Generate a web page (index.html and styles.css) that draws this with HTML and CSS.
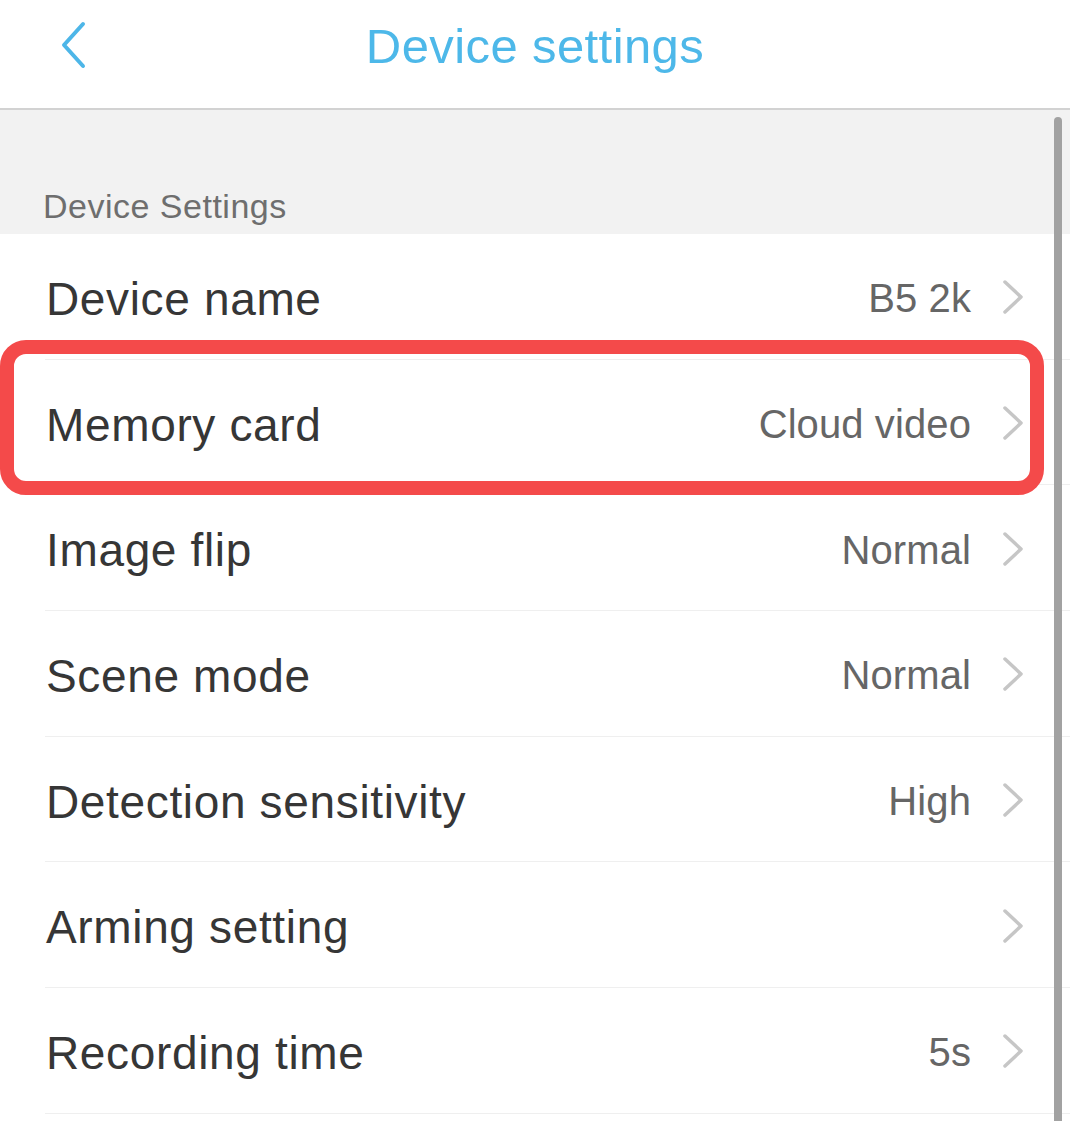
FILE: index.html
```html
<!DOCTYPE html>
<html lang="en">
<head>
<meta charset="utf-8">
<title>Device settings</title>
<link rel="stylesheet" href="styles.css">
</head>
<body>
<div class="screen">
  <header class="topbar">
    <span class="back">
      <svg width="30" height="50" viewBox="0 0 30 50"><polyline points="22,3 3,24 22,45" fill="none" stroke="#4db6e8" stroke-width="4" stroke-linecap="round" stroke-linejoin="round"/></svg>
    </span>
    <h1 class="title">Device settings</h1>
  </header>
  <div class="section-head"><span>Device Settings</span></div>
  <ul class="list">
    <li class="row"><span class="label">Device name</span><span class="value">B5 2k</span><span class="chev"><svg width="22" height="34" viewBox="0 0 22 34"><polyline points="3,2 19,17 3,32" fill="none" stroke="#c6c6c6" stroke-width="3.5" stroke-linecap="round" stroke-linejoin="round"/></svg></span></li>
    <li class="row"><span class="label">Memory card</span><span class="value">Cloud video</span><span class="chev"><svg width="22" height="34" viewBox="0 0 22 34"><polyline points="3,2 19,17 3,32" fill="none" stroke="#c6c6c6" stroke-width="3.5" stroke-linecap="round" stroke-linejoin="round"/></svg></span></li>
    <li class="row"><span class="label">Image flip</span><span class="value">Normal</span><span class="chev"><svg width="22" height="34" viewBox="0 0 22 34"><polyline points="3,2 19,17 3,32" fill="none" stroke="#c6c6c6" stroke-width="3.5" stroke-linecap="round" stroke-linejoin="round"/></svg></span></li>
    <li class="row"><span class="label">Scene mode</span><span class="value">Normal</span><span class="chev"><svg width="22" height="34" viewBox="0 0 22 34"><polyline points="3,2 19,17 3,32" fill="none" stroke="#c6c6c6" stroke-width="3.5" stroke-linecap="round" stroke-linejoin="round"/></svg></span></li>
    <li class="row"><span class="label">Detection sensitivity</span><span class="value">High</span><span class="chev"><svg width="22" height="34" viewBox="0 0 22 34"><polyline points="3,2 19,17 3,32" fill="none" stroke="#c6c6c6" stroke-width="3.5" stroke-linecap="round" stroke-linejoin="round"/></svg></span></li>
    <li class="row"><span class="label">Arming setting</span><span class="value"></span><span class="chev"><svg width="22" height="34" viewBox="0 0 22 34"><polyline points="3,2 19,17 3,32" fill="none" stroke="#c6c6c6" stroke-width="3.5" stroke-linecap="round" stroke-linejoin="round"/></svg></span></li>
    <li class="row"><span class="label">Recording time</span><span class="value">5s</span><span class="chev"><svg width="22" height="34" viewBox="0 0 22 34"><polyline points="3,2 19,17 3,32" fill="none" stroke="#c6c6c6" stroke-width="3.5" stroke-linecap="round" stroke-linejoin="round"/></svg></span></li>
  </ul>
  <div class="highlight"></div>
  <div class="scrollbar"></div>
</div>
</body>
</html>
```
FILE: styles.css
```css
html, body {
  margin: 0;
  padding: 0;
  background: #ffffff;
}
body {
  font-family: "Liberation Sans", Arial, sans-serif;
  overflow: hidden;
}
.screen {
  position: relative;
  width: 1070px;
  height: 1121px;
  overflow: hidden;
  background: #ffffff;
}
.topbar {
  box-sizing: border-box;
  height: 110px;
  border-bottom: 2px solid #d2d2d2;
  display: flex;
  align-items: center;
  justify-content: center;
  position: relative;
}
.back {
  position: absolute;
  left: 61px;
  top: 21px;
  display: block;
  line-height: 0;
}
.title {
  margin: 0 0 16px 0;
  font-size: 49px;
  font-weight: 400;
  color: #4db8e9;
  letter-spacing: 0.4px;
}
.section-head {
  height: 124px;
  background: #f2f2f2;
  display: flex;
  align-items: flex-end;
  padding-left: 43px;
  box-sizing: border-box;
  padding-bottom: 11px;
}
.section-head span {
  font-size: 34px;
  color: #6e6e6e;
  line-height: 1;
  letter-spacing: 0.5px;
}
.list {
  list-style: none;
  margin: 0;
  padding: 0 0 0 45px;
}
.row {
  box-sizing: border-box;
  height: 125.7px;
  padding-top: 5px;
  border-bottom: 1px solid #efefef;
  display: flex;
  align-items: center;
  padding-right: 46px;
}
.label {
  flex: 1;
  font-size: 46px;
  color: #363636;
  padding-left: 1px;
  letter-spacing: 0.65px;
}
.value {
  font-size: 40px;
  color: #666666;
  margin-right: 31px;
  letter-spacing: 0.1px;
}
.chev {
  display: block;
  line-height: 0;
  width: 22px;
  height: 34px;
  margin-top: -3px;
}
.highlight {
  position: absolute;
  left: 0;
  top: 340px;
  width: 1044px;
  height: 155px;
  box-sizing: border-box;
  border: 14px solid #f44a4a;
  border-radius: 26px;
}
.scrollbar {
  position: absolute;
  left: 1054px;
  top: 117px;
  width: 8px;
  height: 1020px;
  background: #a2a2a2;
  border-radius: 4px;
}
```
